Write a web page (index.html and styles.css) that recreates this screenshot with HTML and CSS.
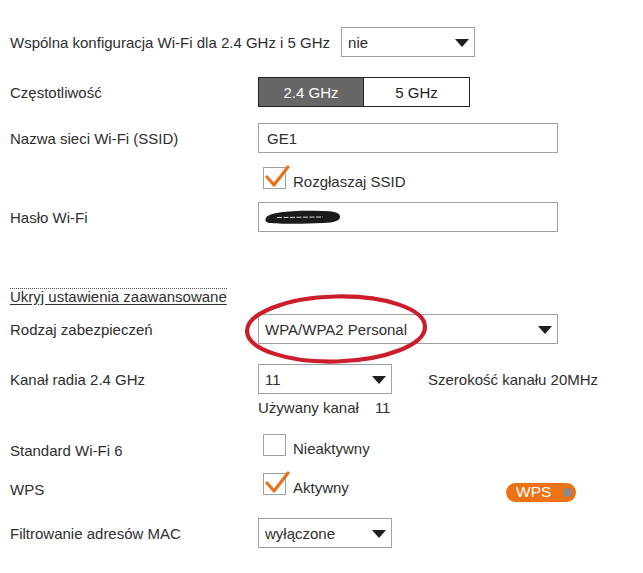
FILE: index.html
```html
<!DOCTYPE html>
<html lang="pl">
<head>
<meta charset="utf-8">
<title>Wi-Fi</title>
<link rel="stylesheet" href="styles.css">
</head>
<body>
<div class="page">
  <div class="row r1">
    <span class="lbl-inline">Wspólna konfiguracja Wi-Fi dla 2.4 GHz i 5 GHz</span>
    <div class="select w134"><span>nie</span><i class="arrow"></i></div>
  </div>

  <div class="row r2">
    <div class="label">Częstotliwość</div>
    <div class="seg">
      <div class="seg-item active">2.4 GHz</div>
      <div class="seg-item">5 GHz</div>
    </div>
  </div>

  <div class="row r3">
    <div class="label">Nazwa sieci Wi-Fi (SSID)</div>
    <div class="input w300">GE1</div>
  </div>

  <div class="row r4 chk-row">
    <div class="label"></div>
    <div class="control">
      <span class="checkbox"><svg class="tick" viewBox="0 0 26 26" width="26" height="26"><path d="M3 13 L10 21 L24 3" fill="none" stroke="#e6731c" stroke-width="3.2" stroke-linecap="round" stroke-linejoin="round"/></svg></span>
      <span class="chk-text">Rozgłaszaj SSID</span>
    </div>
  </div>

  <div class="row r5">
    <div class="label">Hasło Wi-Fi</div>
    <div class="input w300">
      <svg class="scribble" width="76" height="16" viewBox="0 0 76 16"><path d="M1 9 C3 3 30 1 56 2 C67 2 74 3 75 7 C76 11 70 14 58 14 C40 15 14 15 4 14 C0 13 0 11 1 9 Z" fill="#1b1b1b"/><path d="M12 8.5 L58 8" stroke="#e0e0e0" stroke-width="1" stroke-dasharray="5 1.5"/></svg>
    </div>
  </div>

  <div class="row r6">
    <a class="adv-link" href="#">Ukryj ustawienia zaawansowane</a>
  </div>

  <div class="row r7">
    <div class="label">Rodzaj zabezpieczeń</div>
    <div class="select w300"><span>WPA/WPA2 Personal</span><i class="arrow"></i></div>
  </div>

  <div class="row r8">
    <div class="label">Kanał radia 2.4 GHz</div>
    <div class="select w134"><span>11</span><i class="arrow"></i></div>
    <span class="width-note">Szerokość kanału 20MHz</span>
  </div>

  <div class="row r9">
    <div class="label"></div>
    <span class="used">Używany kanał</span><span class="used-num">11</span>
  </div>

  <div class="row r10 chk-row">
    <div class="label">Standard Wi-Fi 6</div>
    <div class="control">
      <span class="checkbox"></span>
      <span class="chk-text">Nieaktywny</span>
    </div>
  </div>

  <div class="row r11 chk-row">
    <div class="label">WPS</div>
    <div class="control wps-control">
      <span class="checkbox"><svg class="tick" viewBox="0 0 26 26" width="26" height="26"><path d="M3 13 L10 21 L24 3" fill="none" stroke="#e6731c" stroke-width="3.2" stroke-linecap="round" stroke-linejoin="round"/></svg></span>
      <span class="chk-text">Aktywny</span>
      <span class="pill">WPS<i class="dot"></i></span>
    </div>
  </div>

  <div class="row r12">
    <div class="label">Filtrowanie adresów MAC</div>
    <div class="select w134"><span>wyłączone</span><i class="arrow"></i></div>
  </div>

  <svg class="annot" width="190" height="76" viewBox="0 0 190 76"><ellipse cx="93" cy="37" rx="89" ry="32.5" fill="none" stroke="#cc1d2a" stroke-width="4.2" transform="rotate(-1.5 93 37)"/></svg>
</div>
</body>
</html>
```

FILE: styles.css
```css
* { box-sizing: border-box; }
html, body { margin: 0; padding: 0; background: #fff; }
body {
  font-family: "Liberation Sans", Arial, sans-serif;
  font-size: 15px;
  color: #2e2e2e;
}
.page {
  position: relative;
  padding: 27px 0 0 10px;
  width: 643px;
  height: 573px;
  overflow: hidden;
}
.row {
  display: flex;
  align-items: center;
}
.label {
  width: 248px;
  flex: none;
}
.lbl-inline { margin-right: 11px; }

.r2 { margin-top: 20px; }
.r3 { margin-top: 16px; }
.r4 { margin-top: 14px; }
.r5 { margin-top: 7px; }
.r6 { margin-top: 55px; height: 18px; }
.r7 { margin-top: 9px; }
.r8 { margin-top: 20px; }
.r9 { margin-top: 4px; height: 18px; }
.r10 { margin-top: 18px; }
.r11 { margin-top: 11px; }
.r12 { margin-top: 17px; }

.select, .input {
  height: 30px;
  border: 1px solid #a0a0a0;
  background: #fff;
  display: flex;
  align-items: center;
}
.select { padding: 0 5px 0 6px; justify-content: space-between; }
.input { padding: 0 8px; }
.w134 { width: 134px; }
.w300 { width: 300px; }
.arrow {
  width: 0; height: 0;
  border-left: 7.5px solid transparent;
  border-right: 7.5px solid transparent;
  border-top: 8px solid #1e1e1e;
  margin-top: 1px;
}

.seg {
  display: flex;
  height: 30px;
  width: 212px;
  border: 1px solid #222;
}
.seg-item {
  flex: 1;
  display: flex;
  align-items: center;
  justify-content: center;
  background: #fff;
  color: #222;
}
.seg-item.active {
  flex: none;
  width: 105px;
  background: #666;
  color: #fff;
  border-right: 1px solid #222;
}

.chk-row { height: 28px; align-items: stretch; }
.chk-row .label { align-self: center; margin-top: 4px; }
.control {
  display: flex;
  align-items: center;
  padding-left: 5px;
}
.checkbox {
  position: relative;
  width: 23px;
  height: 22px;
  border: 1px solid #a0a0a0;
  background: #fff;
  flex: none;
  align-self: flex-start;
}
.tick {
  position: absolute;
  left: 0px;
  top: -4px;
}
.chk-text { margin-left: 7px; margin-top: 1px; }

.scribble { display: block; margin-left: -2px; margin-top: -1px; }

.adv-link {
  color: #2e2e2e;
  text-decoration: underline;
  text-underline-offset: 2px;
  border-top: 1px dotted #555;
  line-height: 16px;
}

.width-note { margin-left: 36px; }
.used-num { margin-left: 16px; }

.wps-control { width: 318px; }
.pill {
  margin-left: auto;
  align-self: center;
  margin-top: 10px;
  width: 70px;
  height: 19px;
  border-radius: 10px;
  background: #ec7213;
  color: #fff;
  display: flex;
  align-items: center;
  padding-left: 10px;
  font-size: 15.5px;
}
.dot {
  width: 9px;
  height: 9px;
  border-radius: 50%;
  background: #8a8a8a;
  margin-left: 12px;
}

.annot {
  position: absolute;
  left: 243px;
  top: 292px;
}
```
